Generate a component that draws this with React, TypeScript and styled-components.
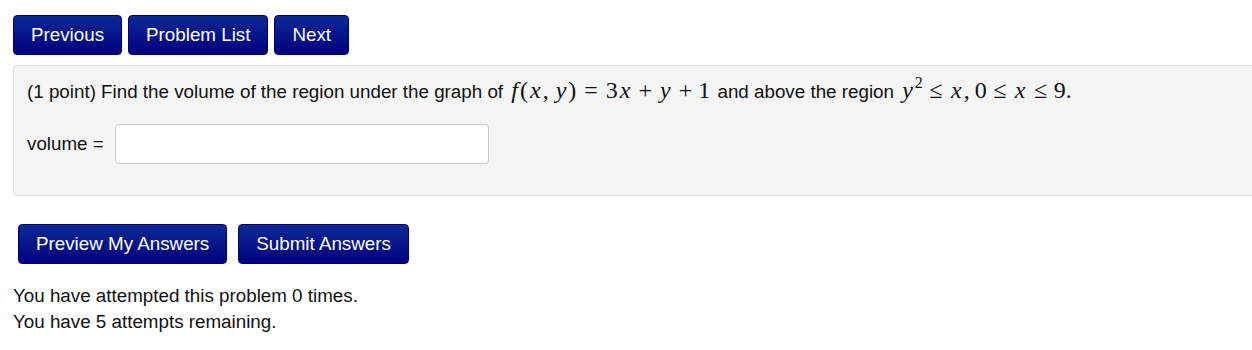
import React from "react";
import styled, { createGlobalStyle } from "styled-components";

const Global = createGlobalStyle`
  html, body { margin: 0; padding: 0; background: #fff; }
  body { font-family: "Liberation Sans", Arial, sans-serif; color: #1a1a1a; }
`;

const Page = styled.div`
  padding: 15px 0 0 13px;
  width: 1300px;
`;

const NavBar = styled.div`
  display: flex;
  gap: 6px;
`;

const NavButton = styled.button<{ $px?: number }>`
  height: 40px;
  padding: 0 ${(p) => p.$px ?? 17}px;
  border: 1px solid #00006a;
  border-radius: 4px;
  background: linear-gradient(to bottom, #0c2a94, #000080);
  color: #fff;
  font-family: "Liberation Sans", Arial, sans-serif;
  font-size: 18.8px;
  cursor: pointer;
`;

const Panel = styled.div`
  margin-top: 10px;
  background: #f5f5f5;
  border: 1px solid #e3e3e3;
  border-radius: 4px;
  padding: 12px 13px 31px;
  height: 131px;
  box-sizing: border-box;
`;

const Problem = styled.div`
  font-size: 18.8px;
  line-height: 26px;
  height: 26px;
  color: #111;
  white-space: nowrap;
`;

const M = styled.span`
  font-family: "Liberation Serif", "DejaVu Serif", serif;
  font-size: 24px;
  line-height: 1;
  margin: 0 2px 0 1px;
`;

const I = styled.i`
  font-family: "Liberation Serif", "DejaVu Serif", serif;
  margin: 0 2px;
`;

const Rel = styled.span<{ $m?: number }>`
  margin: 0 ${(p) => p.$m ?? 6.5}px;
`;

const Bin = styled.span`
  margin: 0 6px;
`;

const Comma = styled.span`
  margin-right: 5px;
`;

const Sup = styled.sup`
  font-size: 16px;
  vertical-align: 10px;
  line-height: 0;
`;

const AnswerRow = styled.div`
  display: flex;
  align-items: center;
  gap: 11px;
  margin-top: 20px;
  font-size: 18.8px;
  color: #111;
`;

const Input = styled.input`
  width: 374px;
  height: 40px;
  box-sizing: border-box;
  border: 1px solid #ccc;
  border-radius: 4px;
  background: #fff;
`;

const SubmitBar = styled.div`
  display: flex;
  gap: 11px;
  margin: 28px 0 0 5px;
`;

const Status = styled.div`
  margin-top: 19px;
  font-size: 18.8px;
  line-height: 26px;
  color: #111;
`;

export default function App() {
  return (
    <>
      <Global />
      <Page>
        <NavBar>
          <NavButton>Previous</NavButton>
          <NavButton>Problem List</NavButton>
          <NavButton>Next</NavButton>
        </NavBar>
        <Panel>
          <Problem>
            {"(1 point) Find the volume of the region under the graph of "}
            <M>
              <I>f</I>(<I>x</I>
              <Comma>,</Comma>
              <I>y</I>)<Rel $m={8}>=</Rel>3<I>x</I>
              <Bin>+</Bin>
              <I>y</I>
              <Bin>+</Bin>1
            </M>
            {" and above the region "}
            <M>
              <I>y</I>
              <Sup>2</Sup>
              <Rel>≤</Rel>
              <I>x</I>
              <Comma>,</Comma>0<Rel>≤</Rel>
              <I>x</I>
              <Rel>≤</Rel>9.
            </M>
          </Problem>
          <AnswerRow>
            <span>volume =</span>
            <Input aria-label="volume" />
          </AnswerRow>
        </Panel>
        <SubmitBar>
          <NavButton>Preview My Answers</NavButton>
          <NavButton>Submit Answers</NavButton>
        </SubmitBar>
        <Status>
          You have attempted this problem 0 times.
          <br />
          You have 5 attempts remaining.
        </Status>
      </Page>
    </>
  );
}
